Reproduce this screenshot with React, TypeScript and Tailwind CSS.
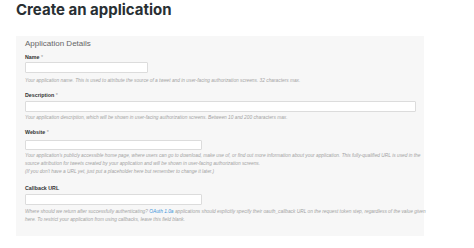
export default function App() {
  return (
    <div className="w-[474px] h-[248px] overflow-hidden bg-white font-['Liberation_Sans',Arial,sans-serif]">
      <h1 className="pl-4 pt-[1px] font-['Inter',sans-serif] text-[15px] leading-[18px] font-bold text-[#292f33]">
        Create an application
      </h1>

      <div className="ml-4 mt-[17px] h-[200px] w-[408px] bg-[#f7f7f7] pl-[9px] pr-2 pt-[3px]">
        <div className="text-[8px] leading-[10px] text-[#666]">Application Details</div>

        {/* Name */}
        <label className="mt-[5px] block text-[5.3px] leading-[7px] font-bold text-[#333]">
          Name <span className="font-normal text-[#999]">*</span>
        </label>
        <input className="mt-[1px] block h-[11px] w-[123px] rounded-[1px] border border-[#dcdcdc] bg-white" />
        <p className="mt-[3.5px] text-[4.8px] leading-[8px] italic text-[#a3a3a3]">
          Your application name. This is used to attribute the source of a tweet and in user-facing authorization screens. 32 characters max.
        </p>

        {/* Description */}
        <label className="mt-[7px] block text-[5.3px] leading-[7px] font-bold text-[#333]">
          Description <span className="font-normal text-[#999]">*</span>
        </label>
        <input className="mt-[2.5px] block h-[11px] w-[391px] rounded-[1px] border border-[#dcdcdc] bg-white" />
        <p className="mt-[2px] text-[4.8px] leading-[8px] italic text-[#a3a3a3]">
          Your application description, which will be shown in user-facing authorization screens. Between 10 and 200 characters max.
        </p>

        {/* Website */}
        <label className="mt-[7px] block text-[5.3px] leading-[7px] font-bold text-[#333]">
          Website <span className="font-normal text-[#999]">*</span>
        </label>
        <input className="mt-[4px] block h-[10px] w-[177px] rounded-[1px] border border-[#dcdcdc] bg-white" />
        <p className="mt-[2px] whitespace-nowrap text-[4.8px] leading-[8.2px] italic text-[#a3a3a3]">
          Your application's publicly accessible home page, where users can go to download, make use of, or find out more information about your application. This fully-qualified URL is used in the
          <br />
          source attribution for tweets created by your application and will be shown in user-facing authorization screens.
          <br />
          (If you don't have a URL yet, just put a placeholder here but remember to change it later.)
        </p>

        {/* Callback URL */}
        <label className="mt-[8px] block text-[5.3px] leading-[7px] font-bold text-[#333]">Callback URL</label>
        <input className="mt-[2.5px] block h-[11px] w-[177px] rounded-[1px] border border-[#dcdcdc] bg-white" />
        <p className="mt-[3px] whitespace-nowrap text-[4.8px] leading-[8px] italic text-[#a3a3a3]">
          Where should we return after successfully authenticating?{" "}
          <a className="text-[#3b94d9]">OAuth 1.0a</a> applications should explicitly specify their oauth_callback URL on the request token step, regardless of the value given
          <br />
          here. To restrict your application from using callbacks, leave this field blank.
        </p>
      </div>
    </div>
  );
}
